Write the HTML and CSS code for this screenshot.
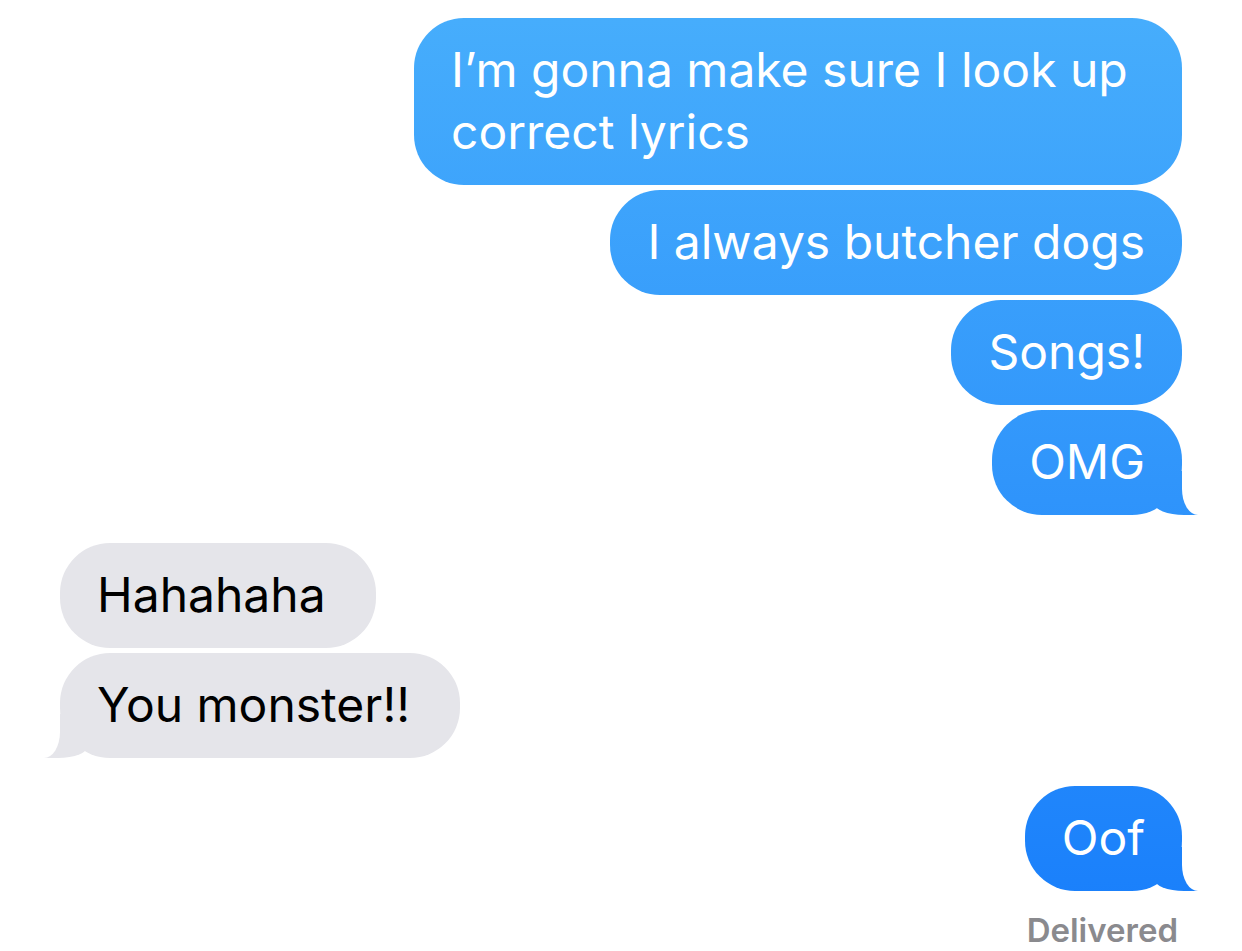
FILE: index.html
```html
<!DOCTYPE html>
<html lang="en">
<head>
<meta charset="utf-8">
<title>Messages</title>
<link rel="stylesheet" href="styles.css">
</head>
<body>
<main class="thread">
  <div class="group group-out">
    <div class="bubble out">I’m gonna make sure I look up correct lyrics</div>
    <div class="bubble out">I always butcher dogs</div>
    <div class="bubble out">Songs!</div>
    <div class="bubble out tail">OMG</div>
  </div>
  <div class="group group-in">
    <div class="bubble in">Hahahaha</div>
    <div class="bubble in tail">You monster!!</div>
  </div>
  <div class="group group-out">
    <div class="bubble out tail">Oof</div>
    <div class="status">Delivered</div>
  </div>
</main>
</body>
</html>
```
FILE: styles.css
```css
html, body {
  margin: 0;
  padding: 0;
  background: #ffffff;
}

.thread {
  display: flex;
  flex-direction: column;
  gap: 28px;
  padding: 18px 60px 0 60px;
  font-family: "Inter", "Noto Sans", "Liberation Sans", sans-serif;
}

.group {
  display: flex;
  flex-direction: column;
  gap: 5px;
}

.group-out { align-items: flex-end; }
.group-in { align-items: flex-start; }

.bubble {
  position: relative;
  box-sizing: border-box;
  max-width: 768px;
  font-size: 48px;
  line-height: 62px;
  padding: 21px 37px 22px 37px;
  border-radius: 50px;
}

.out {
  color: #ffffff;
  background: linear-gradient(to bottom, #47aefc 0px, #2f94fb 500px, #1a80fb 900px) fixed;
}

.in {
  color: #000000;
  background: #e5e5ea;
  padding-right: 50px;
}

.out.tail::before {
  content: "";
  position: absolute;
  bottom: 0;
  right: -16px;
  width: 44px;
  height: 44px;
  background: inherit;
  background-attachment: fixed;
  border-bottom-left-radius: 30px 12px;
}

.out.tail::after {
  content: "";
  position: absolute;
  bottom: 0;
  right: -34px;
  width: 34px;
  height: 46px;
  background: #ffffff;
  border-bottom-left-radius: 16px 26px;
}

.in.tail::before {
  content: "";
  position: absolute;
  bottom: 0;
  left: -16px;
  width: 44px;
  height: 44px;
  background: #e5e5ea;
  border-bottom-right-radius: 30px 12px;
}

.in.tail::after {
  content: "";
  position: absolute;
  bottom: 0;
  left: -34px;
  width: 34px;
  height: 46px;
  background: #ffffff;
  border-bottom-right-radius: 16px 26px;
}

.status {
  margin-top: 14px;
  margin-right: 4px;
  font-size: 33px;
  font-weight: 600;
  color: #8a8a8e;
  line-height: 40px;
}
```
